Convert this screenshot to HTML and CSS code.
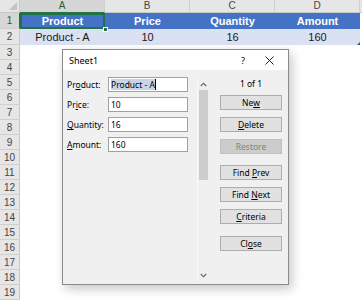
FILE: index.html
```html
<!DOCTYPE html>
<html>
<head>
<meta charset="utf-8">
<link rel="stylesheet" href="styles.css">
</head>
<body>
<div class="sheet">
  <div class="corner"><span class="tri"></span></div>
  <div class="colh colh-sel">A</div>
  <div class="colh">B</div>
  <div class="colh">C</div>
  <div class="colh">D</div>
  <div class="colh gutter"></div>

  <div class="rowh rowh-sel">1</div>
  <div class="cell hd active">Product<span class="fill-handle"></span></div>
  <div class="cell hd">Price</div>
  <div class="cell hd">Quantity</div>
  <div class="cell hd">Amount</div>
  <div class="cell"></div>

  <div class="rowh">2</div>
  <div class="cell dt">Product - A</div>
  <div class="cell dt">10</div>
  <div class="cell dt">16</div>
  <div class="cell dt last">160<span class="resize"></span></div>
  <div class="cell"></div>

  <div class="rowh">3</div><div class="blank"></div>
  <div class="rowh">4</div><div class="blank"></div>
  <div class="rowh">5</div><div class="blank"></div>
  <div class="rowh">6</div><div class="blank"></div>
  <div class="rowh">7</div><div class="blank"></div>
  <div class="rowh">8</div><div class="blank"></div>
  <div class="rowh">9</div><div class="blank"></div>
  <div class="rowh">10</div><div class="blank"></div>
  <div class="rowh">11</div><div class="blank"></div>
  <div class="rowh">12</div><div class="blank"></div>
  <div class="rowh">13</div><div class="blank"></div>
  <div class="rowh">14</div><div class="blank"></div>
  <div class="rowh">15</div><div class="blank"></div>
  <div class="rowh">16</div><div class="blank"></div>
  <div class="rowh">17</div><div class="blank"></div>
  <div class="rowh">18</div><div class="blank"></div>
  <div class="rowh">19</div><div class="blank"></div>
</div>

<div class="dialog">
  <div class="titlebar">
    <span class="title">Sheet1</span>
    <span class="help">?</span>
    <span class="xbtn">
      <svg width="9" height="9" viewBox="0 0 9 9"><path d="M0.5 0.5 L8.5 8.5 M8.5 0.5 L0.5 8.5" stroke="#222" stroke-width="1" fill="none"/></svg>
    </span>
  </div>
  <div class="body">
    <div class="form">
      <div class="field"><span class="label">Pr<u>o</u>duct:</span><div class="input"><span class="seltext">Product - A</span><span class="caret"></span></div></div>
      <div class="field"><span class="label">Pr<u>i</u>ce:</span><div class="input"><span>10</span></div></div>
      <div class="field"><span class="label"><u>Q</u>uantity:</span><div class="input"><span>16</span></div></div>
      <div class="field"><span class="label"><u>A</u>mount:</span><div class="input"><span>160</span></div></div>
    </div>
    <div class="scroll">
      <div class="arrow">
        <svg width="7" height="5" viewBox="0 0 7 5"><path d="M0.8 4 L3.5 1.2 L6.2 4" stroke="#606060" stroke-width="1.1" fill="none"/></svg>
      </div>
      <div class="thumb"></div>
      <div class="track"></div>
      <div class="arrow">
        <svg width="7" height="5" viewBox="0 0 7 5"><path d="M0.8 1 L3.5 3.8 L6.2 1" stroke="#606060" stroke-width="1.1" fill="none"/></svg>
      </div>
    </div>
    <div class="actions">
      <div class="count">1 of 1</div>
      <div class="group">
        <div class="btn"><span>Ne<u>w</u></span></div>
        <div class="btn"><span><u>D</u>elete</span></div>
        <div class="btn disabled"><span>Restore</span></div>
      </div>
      <div class="group g2">
        <div class="btn"><span>Find <u>P</u>rev</span></div>
        <div class="btn"><span>Find <u>N</u>ext</span></div>
        <div class="btn"><span><u>C</u>riteria</span></div>
      </div>
      <div class="group g3">
        <div class="btn"><span>Cl<u>o</u>se</span></div>
      </div>
    </div>
  </div>
</div>
</body>
</html>
```

FILE: styles.css
```css
* { box-sizing: border-box; }
html, body {
  margin: 0;
  padding: 0;
  background: #ffffff;
}
body {
  width: 362px;
  height: 300px;
  overflow: hidden;
  position: relative;
  font-family: "Liberation Sans", Arial, sans-serif;
}

.sheet {
  display: grid;
  grid-template-columns: 20px 85px 85px 85px 85px 2px;
  grid-template-rows: 13px 16px 16px repeat(17, 15px);
}

.corner {
  background: #e6e6e6;
  border-right: 1px solid #c8c8c8;
  border-bottom: 1px solid #c8c8c8;
  position: relative;
}
.corner .tri {
  position: absolute;
  right: 2px;
  bottom: 2px;
  width: 0;
  height: 0;
  border-left: 8px solid transparent;
  border-bottom: 8px solid #c4c4c4;
}

.colh {
  background: #e6e6e6;
  border-right: 1px solid #cfcfcf;
  border-bottom: 1px solid #c8c8c8;
  color: #444;
  font-size: 10px;
  line-height: 12px;
  text-align: center;
}
.colh-sel {
  background: #d6d6d6;
  color: #1f5d3b;
  border-bottom: 1px solid #217346;
}
.gutter { border-right: none; }

.rowh {
  background: #e6e6e6;
  border-right: 1px solid #c8c8c8;
  border-bottom: 1px solid #d0d0d0;
  color: #444;
  font-size: 10px;
  text-align: center;
  display: flex;
  align-items: center;
  justify-content: center;
}
.rowh-sel {
  background: #d6d6d6;
  color: #1f5d3b;
  border-right: 1px solid #217346;
}

.cell {
  font-size: 11px;
  display: flex;
  align-items: center;
  justify-content: center;
  position: relative;
}
.cell.hd {
  background: #4472c4;
  color: #ffffff;
  font-weight: bold;
}
.cell.dt {
  background: #d9e1f2;
  color: #1a1a1a;
}
.cell.active {
  box-shadow: inset 0 0 0 2px #217346;
}
.fill-handle {
  position: absolute;
  right: -3px;
  bottom: -3px;
  width: 5px;
  height: 5px;
  background: #217346;
  border: 1px solid #ffffff;
  z-index: 2;
}
.resize {
  position: absolute;
  right: 0;
  bottom: 0;
  width: 0;
  height: 0;
  border-left: 3px solid transparent;
  border-bottom: 3px solid #2f5597;
}
.blank { grid-column: 2 / -1; }

/* dialog */
.dialog {
  position: absolute;
  left: 62px;
  top: 49px;
  width: 227px;
  height: 236px;
  border: 1px solid #8a8a8a;
  background: #f0f0f0;
  box-shadow: 3px 4px 10px rgba(0,0,0,0.22);
  display: flex;
  flex-direction: column;
  font-family: "Noto Sans", "Open Sans", sans-serif;
  font-size: 8.5px;
  color: #000;
}
.titlebar {
  height: 20px;
  background: #ffffff;
  display: flex;
  align-items: center;
  padding-left: 6px;
}
.title {
  font-size: 9px;
  flex: 1;
}
.help {
  font-size: 9px;
  width: 12px;
  text-align: center;
  margin-right: 16px;
}
.xbtn {
  width: 9px;
  height: 9px;
  display: flex;
  margin-right: 14px;
}
.body {
  flex: 1;
  display: flex;
}
.form {
  width: 134px;
  padding: 7px 0 0 4px;
  display: flex;
  flex-direction: column;
  gap: 5px;
}
.field {
  display: flex;
  height: 15px;
  align-items: center;
}
.label {
  width: 41px;
  white-space: nowrap;
}
.input {
  width: 80px;
  height: 15px;
  background: #ffffff;
  border: 1px solid #a0a0a0;
  padding-left: 2px;
  display: flex;
  align-items: center;
  white-space: nowrap;
}
.seltext {
  background: #c9d5e6;
  line-height: 11px;
}
.caret {
  width: 1px;
  height: 11px;
  background: #000;
}

.scroll {
  width: 12px;
  margin-top: 8px;
  margin-bottom: 3px;
  display: flex;
  flex-direction: column;
  border-left: 1px solid #fafafa;
}
.arrow {
  height: 12px;
  display: flex;
  align-items: center;
  justify-content: center;
}
.thumb {
  height: 90px;
  background: #cdcdcd;
  margin: 0 1px 0 1px;
}
.track { flex: 1; }

.actions {
  flex: 1;
  padding: 8px 0 0 11px;
  display: flex;
  flex-direction: column;
}
.count {
  width: 62px;
  text-align: center;
  height: 12px;
  line-height: 12px;
  margin-bottom: 5px;
}
.group {
  display: flex;
  flex-direction: column;
  gap: 7px;
}
.g2 { margin-top: 11px; }
.g3 { margin-top: 12px; }
.btn {
  width: 62px;
  height: 15px;
  background: #e1e1e1;
  border: 1px solid #adadad;
  display: flex;
  align-items: center;
  justify-content: center;
  color: #000;
  white-space: nowrap;
}
.btn.disabled {
  background: #cccccc;
  border-color: #bfbfbf;
  color: #838383;
}
```
